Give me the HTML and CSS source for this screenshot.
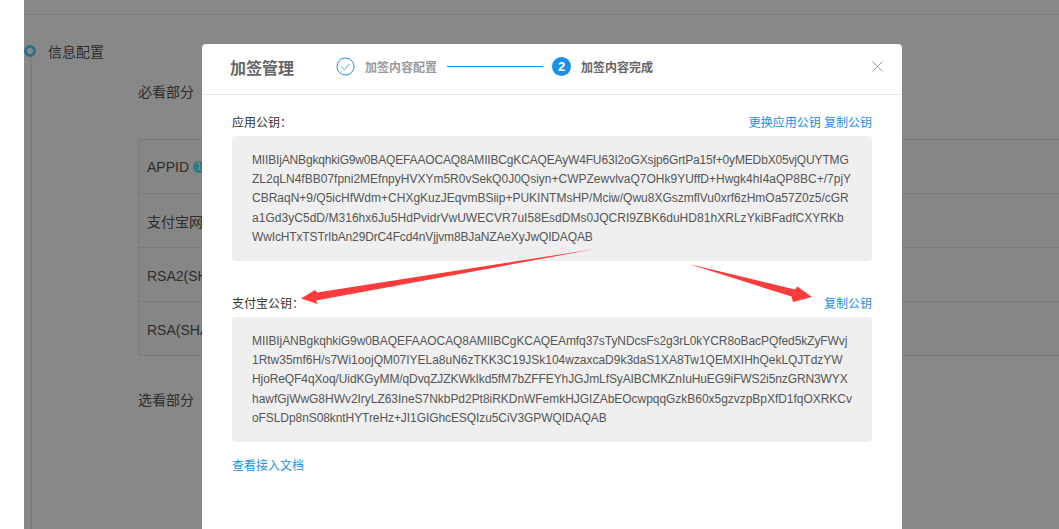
FILE: index.html
```html
<!DOCTYPE html>
<html lang="zh">
<head>
<meta charset="utf-8">
<title>加签管理</title>
<link rel="stylesheet" href="styles.css">
</head>
<body>
<div class="page">
  <div class="topbar"></div>
  <div class="section">
    <div class="section-head"><span class="dot"></span><span class="section-title">信息配置</span></div>
    <div class="section-body">
      <div class="sub-title first">必看部分</div>
      <div class="table">
        <div class="row">APPID <span class="badge">1</span></div>
        <div class="row">支付宝网关</div>
        <div class="row">RSA2(SHA256)密钥</div>
        <div class="row">RSA(SHA1)密钥</div>
      </div>
      <div class="sub-title">选看部分</div>
    </div>
  </div>
</div>
<div class="overlay"></div>
<div class="modal">
  <div class="modal-head">
    <h2 class="modal-title">加签管理</h2>
    <div class="steps">
      <svg class="step-check" width="19" height="19" viewBox="0 0 19 19"><circle cx="9.5" cy="9.5" r="8.5" fill="none" stroke="#1a90e6" stroke-width="1"/><path d="M5.5 10l3 2.8 5-6" fill="none" stroke="#1a90e6" stroke-width="0.8"/></svg>
      <span class="step-text done">加签内容配置</span>
      <span class="step-line"></span>
      <span class="step-num">2</span>
      <span class="step-text active">加签内容完成</span>
    </div>
    <svg class="close" width="11" height="11" viewBox="0 0 11 11"><path d="M0.5 0.5l10 10M10.5 0.5l-10 10" stroke="#999" stroke-width="1" fill="none"/></svg>
  </div>
  <div class="modal-body">
    <div class="key-head">
      <span class="key-label">应用公钥：</span>
      <span class="links"><a class="link">更换应用公钥</a> <a class="link">复制公钥</a></span>
    </div>
    <div class="key-box">
      <div class="key-line a1">MIIBIjANBgkqhkiG9w0BAQEFAAOCAQ8AMIIBCgKCAQEAyW4FU63I2oGXsjp6GrtPa15f+0yMEDbX05vjQUYTMG</div>
      <div class="key-line">ZL2qLN4fBB07fpni2MEfnpyHVXYm5R0vSekQ0J0Qsiyn+CWPZewvlvaQ7OHk9YUffD+Hwgk4hI4aQP8BC+/7pjY</div>
      <div class="key-line">CBRaqN+9/Q5icHfWdm+CHXgKuzJEqvmBSiip+PUKINTMsHP/Mciw/Qwu8XGszmflVu0xrf6zHmOa57Z0z5/cGR</div>
      <div class="key-line a4">a1Gd3yC5dD/M316hx6Ju5HdPvidrVwUWECVR7uI58EsdDMs0JQCRI9ZBK6duHD81hXRLzYkiBFadfCXYRKb</div>
      <div class="key-line a5">WwIcHTxTSTrIbAn29DrC4Fcd4nVjjvm8BJaNZAeXyJwQIDAQAB</div>
    </div>
    <div class="key-head second">
      <span class="key-label">支付宝公钥：</span>
      <span class="links"><a class="link">复制公钥</a></span>
    </div>
    <div class="key-box">
      <div class="key-line b1">MIIBIjANBgkqhkiG9w0BAQEFAAOCAQ8AMIIBCgKCAQEAmfq37sTyNDcsFs2g3rL0kYCR8oBacPQfed5kZyFWvj</div>
      <div class="key-line b2">1Rtw35mf6H/s7Wi1oojQM07IYELa8uN6zTKK3C19JSk104wzaxcaD9k3daS1XA8Tw1QEMXIHhQekLQJTdzYW</div>
      <div class="key-line b3">HjoReQF4qXoq/UidKGyMM/qDvqZJZKWkIkd5fM7bZFFEYhJGJmLfSyAIBCMKZnIuHuEG9iFWS2i5nzGRN3WYX</div>
      <div class="key-line b4">hawfGjWwG8HWv2IryLZ63IneS7NkbPd2Pt8iRKDnWFemkHJGIZAbEOcwpqqGzkB60x5gzvzpBpXfD1fqOXRKCv</div>
      <div class="key-line b5">oFSLDp8nS08kntHYTreHz+JI1GIGhcESQIzu5CiV3GPWQIDAQAB</div>
    </div>
    <a class="link doc">查看接入文档</a>
  </div>
</div>
<svg class="arrows" width="1059" height="529" viewBox="0 0 1059 529">
  <polygon fill="#fa3c3c" points="595,249 317,292.5 315,290 301,298.5 318,304 316,300.5"/>
  <polygon fill="#fa3c3c" points="689,264 795,289.5 797.5,286.5 812,297 793,302 791.5,296.5"/>
</svg>
</body>
</html>
```
FILE: styles.css
```css
* { box-sizing: border-box; }
html, body { margin: 0; height: 100%; overflow: hidden; background: #fff; }
body { font-family: "Liberation Sans", "Noto Sans CJK SC", sans-serif; font-size: 12px; color: #333; }
.page { margin-left: 24px; height: 529px; overflow: hidden; background: #fff; }
.topbar { height: 15px; border-bottom: 1px solid #e4e4e4; }
.section { padding-top: 30px; }
.section-head { display: flex; align-items: center; height: 12px; }
.dot { flex: none; width: 12px; height: 12px; border: 3px solid #58d0ff; border-radius: 50%; background: #fff; }
.section-title { margin-left: 12px; font-size: 14px; color: #555; }
.section-body { margin-left: 6px; padding-left: 106px; border-left: 2px solid #ececec; min-height: 480px; }
.sub-title { font-size: 14px; line-height: 20px; color: #555; }
.sub-title.first { padding-top: 25px; }
.table { margin-top: 37px; margin-bottom: 34px; border: 1px solid #e4e4e4; border-right: 0; border-radius: 3px 0 0 3px; background: #fcfcfc; }
.row { height: 54px; padding-left: 8px; display: flex; align-items: center; gap: 4px; font-size: 14px; color: #555; border-bottom: 1px solid #e4e4e4; }
.row:last-child { border-bottom: 0; height: 53px; }
.badge { width: 12px; height: 12px; line-height: 12px; border-radius: 50%; background: #5ae0ff; color: #fff; font-size: 10px; text-align: center; }
.overlay { position: absolute; left: 24px; top: 0; right: 0; bottom: 0; background: rgba(0, 0, 0, 0.467); }
.modal { position: absolute; left: 202px; top: 44px; width: 700px; height: 485px; background: #fff; border-radius: 4px 4px 0 0; }
.modal-head { display: flex; align-items: center; height: 51px; padding: 0 19px 5px 28px; border-bottom: 1px solid #e8e8e8; }
.modal-title { margin: 0; flex: none; font-size: 16px; font-weight: 700; color: #666; width: 64px; }
.steps { display: flex; align-items: center; margin-left: 42px; flex: 1; }
.step-check { flex: none; }
.step-text { font-weight: 700; font-size: 12px; width: 72px; white-space: nowrap; }
.step-text.done { color: #999; margin-left: 10px; }
.step-text.active { color: #666; margin-left: 10px; }
.step-line { flex: none; width: 96px; height: 1px; margin: 0 9px 0 10px; background: #1a90e6; }
.step-num { flex: none; width: 19px; height: 19px; line-height: 19px; border-radius: 50%; background: #1a90e6; color: #fff; font-size: 13px; font-weight: 700; text-align: center; }
.modal-body { padding: 16px 30px 0; }
.key-head { display: flex; justify-content: space-between; align-items: center; height: 20px; margin-bottom: 5px; }
.key-head.second { margin-top: 31px; }
.link { color: #1a90e6; cursor: pointer; }
.key-box { height: 125px; padding: 15px 20px; background: #efefef; border-radius: 4px; line-height: 19.2px; color: #555; }
.key-line { white-space: nowrap; }
.a1 { letter-spacing: -0.16px; }
.a4 { letter-spacing: 0.035px; }
.a5 { letter-spacing: -0.14px; }
.b1 { letter-spacing: -0.08px; }
.b2 { letter-spacing: -0.02px; }
.b3 { letter-spacing: -0.1px; }
.b4 { letter-spacing: -0.035px; }
.b5 { letter-spacing: -0.08px; }
.doc { display: block; margin-top: 16px; line-height: 16px; }
.arrows { position: absolute; left: 0; top: 0; pointer-events: none; }
```
